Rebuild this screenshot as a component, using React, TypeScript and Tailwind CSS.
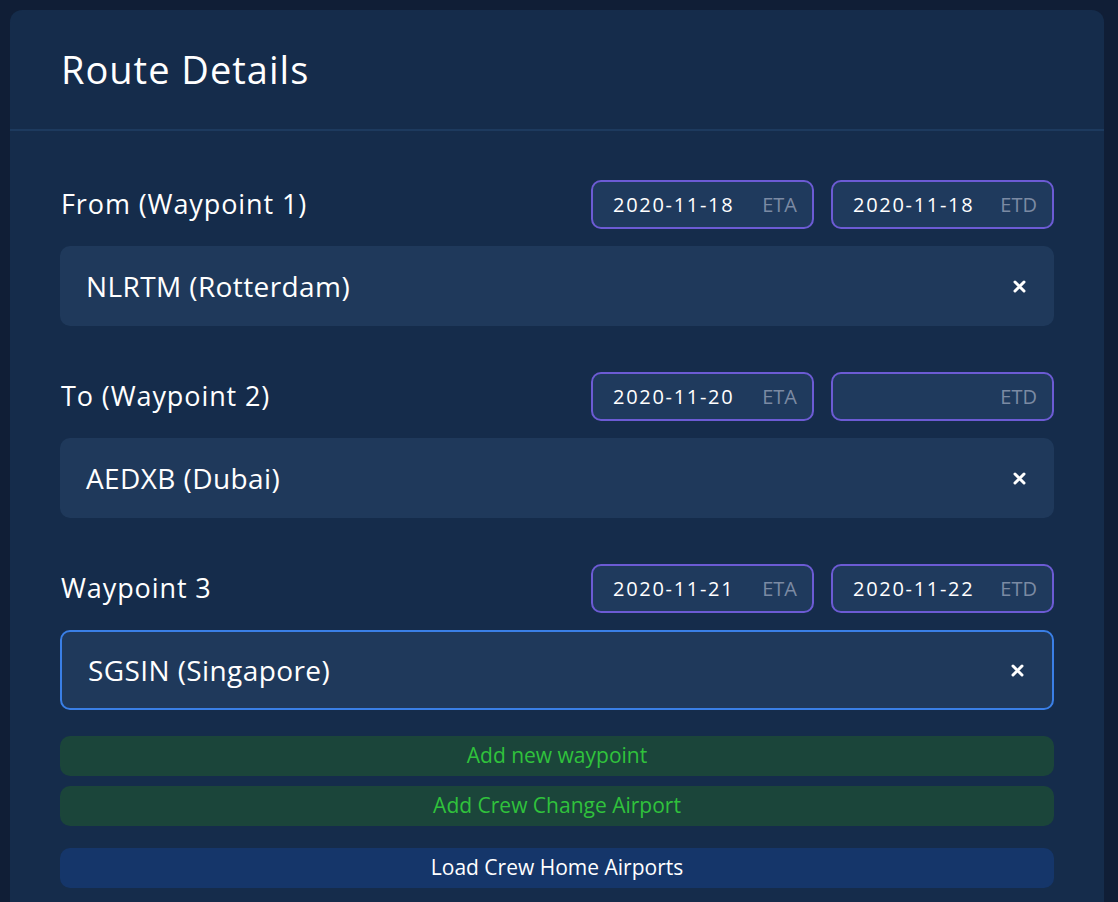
import React from 'react';

interface Waypoint {
  label: string;
  port: string;
  eta: string;
  etd: string;
  focused?: boolean;
}

const waypoints: Waypoint[] = [
  { label: 'From (Waypoint 1)', port: 'NLRTM (Rotterdam)', eta: '2020-11-18', etd: '2020-11-18' },
  { label: 'To (Waypoint 2)', port: 'AEDXB (Dubai)', eta: '2020-11-20', etd: '' },
  { label: 'Waypoint 3', port: 'SGSIN (Singapore)', eta: '2020-11-21', etd: '2020-11-22', focused: true },
];

const DateField = ({ value, tag }: { value: string; tag: string }) => (
  <div className="flex h-[49px] w-[223px] items-center justify-between rounded-[10px] border-2 border-[#6c5bd4] bg-[#1f3a5d] pl-[20px] pr-[15px]">
    <span className="text-[20px] font-medium tracking-[1.7px] text-white">{value}</span>
    <span className="text-[20px] text-[#7b8aa3]">{tag}</span>
  </div>
);

const ClearIcon = () => (
  <svg width="13" height="13" viewBox="0 0 13 13" className="shrink-0">
    <path d="M2 2 L11 11 M11 2 L2 11" stroke="white" strokeWidth="3" strokeLinecap="round" />
  </svg>
);

export default function App() {
  return (
    <div
      className="min-h-[902px] bg-[#101e36] pl-[10px] pr-[14px] pt-[10px]"
      style={{ fontFamily: '"Open Sans", "Noto Sans", sans-serif' }}
    >
      <div className="min-h-[892px] rounded-t-[12px] bg-[#152c4b]">
        {/* Header */}
        <div className="flex h-[121px] items-center border-b-2 border-[#1d3a5e] px-[51px]">
          <h2 className="text-[38px] tracking-[1px] text-white">Route Details</h2>
        </div>

        <div className="flex flex-col px-[50px] pt-[49px]">
          {waypoints.map((wp, i) => (
            <div key={wp.label} className={i > 0 ? 'mt-[46px]' : ''}>
              <div className="flex h-[49px] items-center justify-between">
                <span className="pl-[1px] text-[27px] tracking-[0.9px] text-white">{wp.label}</span>
                <div className="flex gap-[17px]">
                  <DateField value={wp.eta} tag="ETA" />
                  <DateField value={wp.etd} tag="ETD" />
                </div>
              </div>
              <div
                className={`mt-[17px] flex h-[80px] items-center justify-between rounded-[10px] bg-[#1f395b] pl-[26px] pr-[28px] ${
                  wp.focused ? 'border-2 border-[#3a7fe6] pl-[24px] pr-[26px]' : ''
                }`}
              >
                <span className="text-[28px] tracking-[0.4px] text-white">{wp.port}</span>
                <ClearIcon />
              </div>
            </div>
          ))}

          {/* Actions */}
          <button className="mt-[26px] h-[40px] rounded-[10px] bg-[#1b453a] text-[21px] text-[#30c23c]">
            Add new waypoint
          </button>
          <button className="mt-[10px] h-[40px] rounded-[10px] bg-[#1b453a] text-[21px] text-[#30c23c]">
            Add Crew Change Airport
          </button>
          <button className="mt-[22px] h-[40px] rounded-[10px] bg-[#15366a] text-[21px] text-white">
            Load Crew Home Airports
          </button>
        </div>
      </div>
    </div>
  );
}
